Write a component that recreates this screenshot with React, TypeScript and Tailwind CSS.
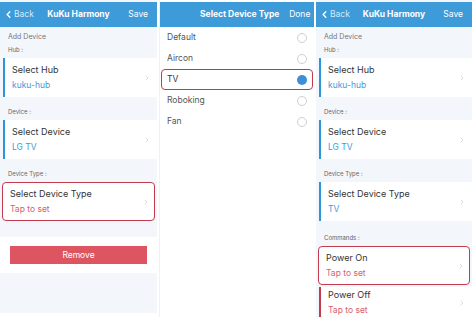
import { ChevronLeft, ChevronRight } from "lucide-react";

function Header({ title, left, right }: { title: string; left?: boolean; right: string }) {
  return (
    <div className="mt-[2px] h-[25px] bg-[#3d9bd9] flex items-center px-[4px] text-white text-[8.5px] shrink-0">
      <div className="w-[36px] flex items-center shrink-0">
        {left && (
          <>
            <ChevronLeft className="w-[11px] h-[11px] -ml-[1px]" strokeWidth={3} />
            <span className="text-[#d6eaf8]">Back</span>
          </>
        )}
      </div>
      <div className="flex-1 text-center font-bold whitespace-nowrap">{title}</div>
      <div className="w-[36px] text-right pr-[5px] shrink-0">{right}</div>
    </div>
  );
}

function Label({ text, h }: { text: string; h: string }) {
  return (
    <div className={`${h} shrink-0 flex items-end pb-[4px] pl-[8px] text-[6px] text-[#666]`}>
      {text}
    </div>
  );
}

function Card({
  title,
  value,
  tone,
  boxed,
  h = "h-[39px]",
}: {
  title: string;
  value: string;
  tone: "blue" | "red";
  boxed?: boolean;
  h?: string;
}) {
  const valueColor = tone === "blue" ? "text-[#3d9bd9]" : "text-[#d5616d]";
  if (boxed) {
    return (
      <div className={`${h} shrink-0 mx-[2px] bg-white border-[1.5px] border-[#c23a4c] rounded-[4px] flex items-center pl-[7px] pr-[4px]`}>
        <div className="flex-1 flex flex-col gap-[2px]">
          <div className="text-[9px] text-[#333]">{title}</div>
          <div className={`text-[8.5px] ${valueColor}`}>{value}</div>
        </div>
        <ChevronRight className="w-[8px] h-[8px] text-[#c8c8c8]" />
      </div>
    );
  }
  const bar = tone === "blue" ? "border-[#2d95d6]" : "border-[#c23a4c]";
  return (
    <div className={`${h} shrink-0 ml-[3px] bg-white border-l-2 ${bar} flex items-center pl-[7px] pr-[6px]`}>
      <div className="flex-1 flex flex-col gap-[2px]">
        <div className="text-[9px] text-[#333]">{title}</div>
        <div className={`text-[8.5px] ${valueColor}`}>{value}</div>
      </div>
      <ChevronRight className="w-[8px] h-[8px] text-[#c8c8c8]" />
    </div>
  );
}

function Radio({ on }: { on?: boolean }) {
  return on ? (
    <div className="w-[10px] h-[10px] rounded-full bg-[#3d8fd6]" />
  ) : (
    <div className="w-[10px] h-[10px] rounded-full border border-[#cfcfcf]" />
  );
}

export default function App() {
  const types = ["Default", "Aircon", "TV", "Roboking", "Fan"];
  return (
    <div
      className="w-[474px] h-[317px] bg-white flex gap-[2px] overflow-hidden"
      style={{ fontFamily: "Inter, 'Liberation Sans', sans-serif" }}
    >
      {/* Left: Add Device */}
      <div className="w-[157px] h-[313px] shrink-0 bg-[#f3f6fb] flex flex-col">
        <Header title="KuKu Harmony" left right="Save" />
        <div className="h-[15px] shrink-0 flex items-end pl-[8px] text-[7px] text-[#777]">Add Device</div>
        <Label text="Hub :" h="h-[16px]" />
        <Card title="Select Hub" value="kuku-hub" tone="blue" />
        <Label text="Device :" h="h-[23px]" />
        <Card title="Select Device" value="LG TV" tone="blue" />
        <Label text="Device Type :" h="h-[23px]" />
        <Card title="Select Device Type" value="Tap to set" tone="red" boxed />
        <div className="h-[16px] shrink-0" />
        <div className="h-[36px] bg-white flex items-center px-[10px] shrink-0">
          <div className="w-full h-[18px] bg-[#dc5560] text-white text-[8.5px] flex items-center justify-center">
            Remove
          </div>
        </div>
      </div>

      {/* Middle: Select Device Type */}
      <div className="w-[155px] shrink-0 bg-white flex flex-col border-l border-[#eef1f6]">
        <Header title="Select Device Type" right="Done" />
        <div className="flex flex-col">
          {types.map((t) => (
            <div
              key={t}
              className={
                t === "TV"
                  ? "h-[21px] shrink-0 mx-[1px] border-[1.5px] border-[#c23a4c] rounded-[4px] flex items-center pl-[5px] pr-[5px] text-[8.5px] text-[#333]"
                  : "h-[21px] shrink-0 flex items-center pl-[7px] pr-[7px] text-[8.5px] text-[#555]"
              }
            >
              <span className="flex-1">{t}</span>
              <Radio on={t === "TV"} />
            </div>
          ))}
        </div>
      </div>

      {/* Right: Commands */}
      <div className="w-[156px] shrink-0 bg-[#f3f6fb] flex flex-col">
        <Header title="KuKu Harmony" left right="Save" />
        <div className="h-[15px] shrink-0 flex items-end pl-[8px] text-[7px] text-[#777]">Add Device</div>
        <Label text="Hub :" h="h-[16px]" />
        <Card title="Select Hub" value="kuku-hub" tone="blue" />
        <Label text="Device :" h="h-[23px]" />
        <Card title="Select Device" value="LG TV" tone="blue" />
        <Label text="Device Type :" h="h-[23px]" />
        <Card title="Select Device Type" value="TV" tone="blue" />
        <Label text="Commands :" h="h-[25px]" />
        <Card title="Power On" value="Tap to set" tone="red" boxed />
        <div className="h-[2px] shrink-0" />
        <Card title="Power Off" value="Tap to set" tone="red" h="h-[31px]" />
      </div>
    </div>
  );
}
